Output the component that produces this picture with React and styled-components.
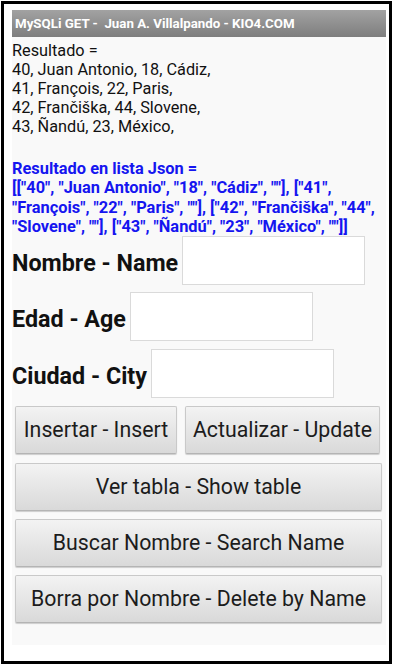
import React from "react";
import styled, { createGlobalStyle } from "styled-components";

const Global = createGlobalStyle`
  html, body {
    margin: 0;
    padding: 0;
    background: #fff;
  }
  body {
    font-family: Roboto, "Noto Sans", "Liberation Sans", sans-serif;
  }
`;

const Frame = styled.div`
  box-sizing: border-box;
  margin: 1px 0 0 1px;
  width: 391px;
  height: 663px;
  border: 3px solid #000;
  padding: 6px 3px 0 8px;
`;

const Screen = styled.div`
  width: 374px;
  height: 635px;
  background: #f9f9f9;
  display: flex;
  flex-direction: column;
`;

const TitleBar = styled.div`
  height: 27px;
  display: flex;
  align-items: center;
  padding-left: 3px;
  background: linear-gradient(#a2a2a2, #7e7e7e);
  color: #fff;
  font-weight: bold;
  font-size: 13.3px;
  white-space: pre;
`;

const Result = styled.div`
  margin-top: 4px;
  font-size: 16.3px;
  line-height: 19px;
  color: #111;
`;

const JsonResult = styled.div`
  margin-top: 23px;
  font-size: 16.4px;
  font-weight: bold;
  line-height: 19.4px;
  color: #1515f0;
  white-space: nowrap;
`;

const Line = styled.div``;

const FieldRow = styled.div`
  display: flex;
  align-items: center;
  margin-top: ${(p) => p.$top}px;
`;

const FieldLabel = styled.span`
  font-size: 23.3px;
  font-weight: bold;
  color: #111;
  padding-top: 6px;
`;

const TextBox = styled.input`
  box-sizing: border-box;
  width: 183px;
  height: 49px;
  margin-left: 4px;
  background: #fff;
  border: 1px solid #dadada;
  outline: none;
`;

const ButtonRow = styled.div`
  display: flex;
  gap: 8px;
  margin: ${(p) => p.$top}px 0 0 3px;
`;

const Button = styled.button`
  box-sizing: border-box;
  width: ${(p) => p.$w}px;
  height: 48px;
  padding: 0;
  background: linear-gradient(#f3f3f3, #d9d9d9);
  border: 1px solid #c9c9c9;
  border-bottom-color: #b4b4b4;
  border-radius: 2px;
  box-shadow: 0 1px 1px rgba(0, 0, 0, 0.18);
  font-family: Roboto, "Noto Sans", "Liberation Sans", sans-serif;
  font-size: 21.3px;
  color: #1c1c1c;
  white-space: nowrap;
`;

const rows = [
  "40, Juan Antonio, 18, Cádiz,",
  "41, François, 22, Paris,",
  "42, Frančiška, 44, Slovene,",
  "43, Ñandú, 23, México,",
];

const json = [
  '[["40", "Juan Antonio", "18", "Cádiz", ""], ["41",',
  '"François", "22", "Paris", ""], ["42", "Frančiška", "44",',
  '"Slovene", ""], ["43", "Ñandú", "23", "México", ""]]',
];

export default function App() {
  return (
    <>
      <Global />
      <Frame>
        <Screen>
          <TitleBar>{"MySQLi GET -  Juan A. Villalpando - KIO4.COM"}</TitleBar>
          <Result>
            <Line>Resultado =</Line>
            {rows.map((r) => (
              <Line key={r}>{r}</Line>
            ))}
          </Result>
          <JsonResult>
            <Line>Resultado en lista Json =</Line>
            {json.map((r) => (
              <Line key={r}>{r}</Line>
            ))}
          </JsonResult>
          <FieldRow $top={-1}>
            <FieldLabel>Nombre - Name</FieldLabel>
            <TextBox />
          </FieldRow>
          <FieldRow $top={7}>
            <FieldLabel>Edad - Age</FieldLabel>
            <TextBox />
          </FieldRow>
          <FieldRow $top={8}>
            <FieldLabel>Ciudad - City</FieldLabel>
            <TextBox />
          </FieldRow>
          <ButtonRow $top={8}>
            <Button $w={162}>Insertar - Insert</Button>
            <Button $w={195}>Actualizar - Update</Button>
          </ButtonRow>
          <ButtonRow $top={9}>
            <Button $w={367}>Ver tabla - Show table</Button>
          </ButtonRow>
          <ButtonRow $top={8}>
            <Button $w={367}>Buscar Nombre - Search Name</Button>
          </ButtonRow>
          <ButtonRow $top={8}>
            <Button $w={367}>Borra por Nombre - Delete by Name</Button>
          </ButtonRow>
        </Screen>
      </Frame>
    </>
  );
}
